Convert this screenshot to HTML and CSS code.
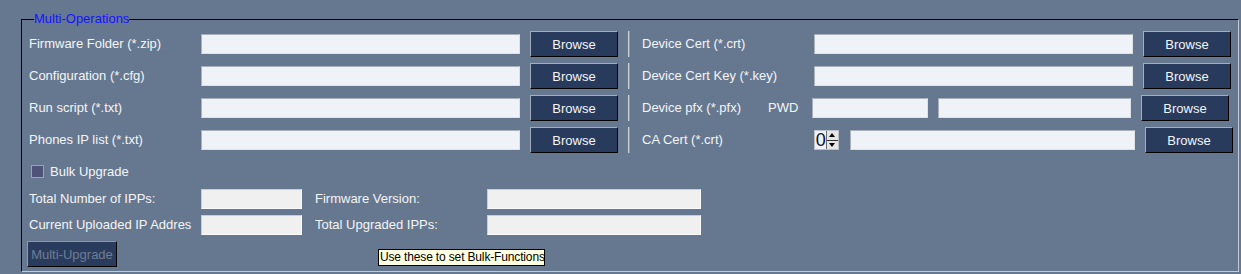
FILE: index.html
```html
<!DOCTYPE html>
<html>
<head>
<meta charset="utf-8">
<link rel="stylesheet" href="styles.css">
</head>
<body>
<fieldset class="group">
  <legend class="legend">Multi-Operations</legend>
  <div class="rows">
    <div class="row">
      <span class="lbl">Firmware Folder (*.zip)</span>
      <span class="field w-main"></span>
      <button class="btn">Browse</button>
      <span class="sep"></span>
      <span class="lbl">Device Cert (*.crt)</span>
      <span class="field w-main"></span>
      <button class="btn">Browse</button>
    </div>
    <div class="row">
      <span class="lbl">Configuration (*.cfg)</span>
      <span class="field w-main"></span>
      <button class="btn">Browse</button>
      <span class="sep"></span>
      <span class="lbl">Device Cert Key (*.key)</span>
      <span class="field w-main"></span>
      <button class="btn">Browse</button>
    </div>
    <div class="row">
      <span class="lbl">Run script (*.txt)</span>
      <span class="field w-main"></span>
      <button class="btn">Browse</button>
      <span class="sep"></span>
      <span class="lbl lbl-pfx">Device pfx (*.pfx)</span>
      <span class="lbl lbl-pwd">PWD</span>
      <span class="field w-pwd"></span>
      <span class="field w-pfx"></span>
      <button class="btn btn-pfx">Browse</button>
    </div>
    <div class="row">
      <span class="lbl">Phones IP list (*.txt)</span>
      <span class="field w-main"></span>
      <button class="btn">Browse</button>
      <span class="sep"></span>
      <span class="lbl">CA Cert (*.crt)</span>
      <span class="spin">
        <span class="spin-val">0</span>
        <span class="spin-btns">
          <span class="spin-up"></span>
          <span class="spin-down"></span>
        </span>
      </span>
      <span class="field w-ca"></span>
      <button class="btn btn-ca">Browse</button>
    </div>
  </div>
  <div class="check">
    <span class="box"></span>
    <span class="check-lbl">Bulk Upgrade</span>
  </div>
  <div class="stats">
    <div class="stat-row">
      <span class="lbl">Total Number of IPPs:</span>
      <span class="sfield w-count"></span>
      <span class="lbl lbl-stat2">Firmware Version:</span>
      <span class="sfield w-ver"></span>
    </div>
    <div class="stat-row">
      <span class="lbl">Current Uploaded IP Addres</span>
      <span class="sfield w-count"></span>
      <span class="lbl lbl-stat2">Total Upgraded IPPs:</span>
      <span class="sfield w-ver"></span>
    </div>
  </div>
  <button class="btn btn-disabled">Multi-Upgrade</button>
</fieldset>
<div class="tooltip">Use these to set Bulk-Functions</div>
</body>
</html>
```

FILE: styles.css
```css
html, body {
  margin: 0;
  padding: 0;
}
body {
  position: relative;
  width: 1241px;
  height: 274px;
  overflow: hidden;
  background: #66788f;
  font-family: "Liberation Sans", Arial, sans-serif;
  font-size: 13px;
  color: #f4f5f7;
}
.group {
  margin: 12px 2px 0 21px;
  padding: 5px 0 4px 7px;
  border-style: solid;
  border-width: 1px;
  border-color: #000 #c3cad4 #c3cad4 #000;
  min-width: 0;
  box-sizing: border-box;
  height: 260px;
}
.legend {
  padding: 0;
  margin-left: 5px;
  color: #1414ff;
  font-size: 13px;
  line-height: 14px;
}
.rows {
  display: flex;
  flex-direction: column;
  gap: 6px;
}
.row {
  display: flex;
  align-items: center;
  height: 26px;
}
.lbl {
  width: 172px;
  flex: none;
  white-space: nowrap;
  line-height: 16px;
}
.lbl-pfx { width: 126px; }
.lbl-pwd { width: 44px; }
.field {
  flex: none;
  height: 20px;
  box-sizing: border-box;
  background: #eff3f8;
  border-style: solid;
  border-width: 1px;
  border-color: #a9b0ba #dde2e8 #dde2e8 #a9b0ba;
}
.w-main { width: 319px; }
.w-pwd { width: 116px; }
.w-pfx { width: 193px; margin-left: 10px; }
.w-ca { width: 285px; margin-left: 11px; }
.btn {
  flex: none;
  width: 88px;
  height: 26px;
  margin-left: 10px;
  padding: 0;
  box-sizing: border-box;
  background: #283b5c;
  color: #f4f6fa;
  font-family: "Liberation Sans", Arial, sans-serif;
  font-size: 13px;
  border-style: solid;
  border-width: 1px;
  border-color: #a4adbb #000 #000 #a4adbb;
}
.btn-pfx { margin-left: 10px; }
.sep {
  flex: none;
  width: 1px;
  height: 26px;
  margin-left: 10px;
  margin-right: 12px;
  background: #cdd2da;
  border-right: 1px solid #8a97a8;
}
.spin {
  flex: none;
  display: flex;
  width: 25px;
  height: 20px;
  box-sizing: border-box;
  background: #eff3f8;
  border: 1px solid #b9c0ca;
}
.spin-val {
  width: 12px;
  color: #0a1030;
  font-size: 18px;
  line-height: 18px;
  text-align: center;
}
.spin-btns {
  display: flex;
  flex-direction: column;
  width: 11px;
  border-left: 1px solid #6b6b6b;
  background: #e6e6e6;
}
.spin-up, .spin-down {
  flex: 1;
  position: relative;
}
.spin-up { border-bottom: 1px solid #333; }
.spin-up::after, .spin-down::after {
  content: "";
  position: absolute;
  left: 2px;
  width: 0;
  height: 0;
  border-left: 3.5px solid transparent;
  border-right: 3.5px solid transparent;
}
.spin-up::after { top: 2px; border-bottom: 4px solid #000; }
.spin-down::after { top: 2px; border-top: 4px solid #000; }
.check {
  display: flex;
  align-items: center;
  height: 13px;
  margin-top: 12px;
  padding-left: 2px;
}
.box {
  width: 13px;
  height: 13px;
  box-sizing: border-box;
  background: #4e5479;
  border-style: solid;
  border-width: 1px;
  border-color: #3a3f5a #c9ced8 #c9ced8 #3a3f5a;
  outline: 1px solid #9aa3b3;
  outline-offset: -1px;
  flex: none;
}
.check-lbl {
  margin-left: 6px;
  white-space: nowrap;
}
.stats {
  display: flex;
  flex-direction: column;
  gap: 6px;
  margin-top: 11px;
}
.stat-row {
  display: flex;
  align-items: center;
  height: 20px;
}
.sfield {
  flex: none;
  height: 20px;
  box-sizing: border-box;
  background: #f0f0f0;
  border-style: solid;
  border-width: 1px;
  border-color: #c9ccd2 #fafafa #fafafa #c9ccd2;
}
.w-count { width: 101px; }
.w-ver { width: 214px; }
.lbl-stat2 { margin-left: 13px; }
.btn-disabled {
  display: block;
  width: 90px;
  margin: 6px 0 0 -2px;
  color: #6f7d93;
  background: #2a3c5d;
  border-color: #8e99aa #000 #000 #8e99aa;
}
.tooltip {
  position: absolute;
  left: 378px;
  top: 249px;
  width: 167px;
  height: 17px;
  box-sizing: border-box;
  background: #ffffe1;
  border: 1px solid #000;
  color: #000;
  font-size: 12px;
  line-height: 15px;
  letter-spacing: -0.15px;
  white-space: nowrap;
  padding-left: 1px;
  overflow: hidden;
}
```
